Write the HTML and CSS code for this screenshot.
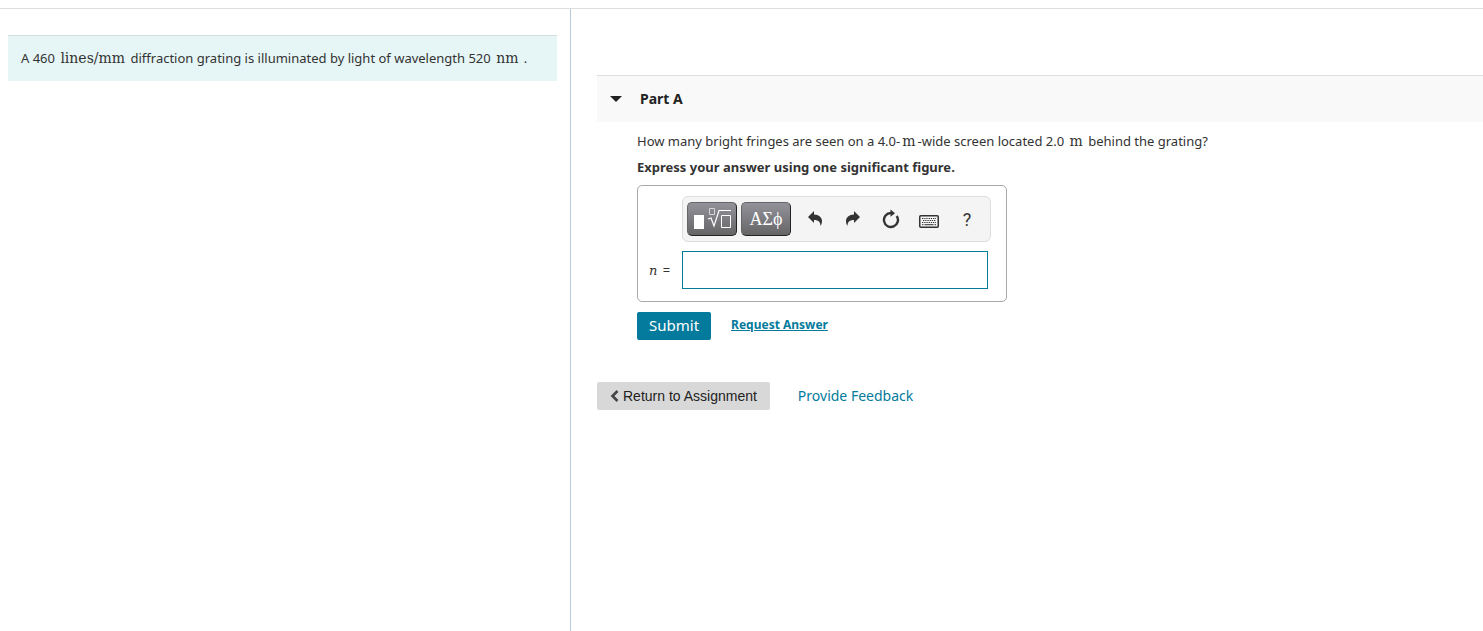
FILE: index.html
```html
<!DOCTYPE html>
<html lang="en">
<head>
  <meta charset="UTF-8" />
  <title>Diffraction Grating</title>
  <meta name="viewport" content="width=device-width, initial-scale=1.0"/>
  <link rel="stylesheet" href="styles.css">
</head>
<body>

  <div class="page">
    <aside class="intro">
      <p class="problem">A 460 <span class="math">lines/mm</span> diffraction grating is illuminated by light of wavelength 520 <span class="math">nm</span> .</p>
    </aside>

    <main class="content">
      <section>
        <h2 class="part-header">
          <button type="button" class="part-toggle" aria-expanded="true">
            <svg width="12" height="6" viewBox="0 0 12 6"><path d="M0 0h12L6 6z" fill="currentColor"/></svg>
            Part A
          </button>
        </h2>

        <form class="part-body">
          <p class="question">How many bright fringes are seen on a 4.0-<span class="math">m</span>-wide screen located 2.0 <span class="math">m</span> behind the grating?</p>
          <p class="instructions">Express your answer using one significant figure.</p>

          <div class="answer-box">
            <div class="toolbar">
              <button type="button" class="palette" aria-label="Templates">
                <svg width="38" height="22" viewBox="0 0 38 22" fill="none" stroke="#fff">
                  <path d="M1 7h10v14H1z" fill="#fff" stroke="none"/>
                  <path d="M16.500.5h5v6h-5z" stroke="#d5d5d8"/>
                  <path d="M15 11l3-1 3 8 5-15.500h12" stroke-width="1.200"/>
                  <path d="M28.500 7.500h9v12h-9z"/>
                </svg>
              </button>
              <button type="button" class="palette">ΑΣϕ</button>
              <button type="button" class="tool" aria-label="Undo">
                <svg width="14" height="16" viewBox="0 0 14 16"><path d="M0 6L6 0v3.500c5 0 8 3 8 6.500 0 2-.7 3.700-1.500 5 0-4-2-6-6.500-6v3z" fill="currentColor"/></svg>
              </button>
              <button type="button" class="tool" aria-label="Redo">
                <svg width="14" height="16" viewBox="0 0 14 16"><path d="M14 6L8 0v3.500c-5 0-8 3-8 6.500 0 2 .7 3.700 1.500 5 0-4 2-6 6.500-6v3z" fill="currentColor"/></svg>
              </button>
              <button type="button" class="tool" aria-label="Reset">
                <svg width="18" height="20" viewBox="0 0 18 20"><path d="M14.700 7A7 7 0 1 1 9 4" fill="none" stroke="currentColor" stroke-width="2.400"/><path d="M8.500 0.500L13 4.200L8.500 7.800z" fill="currentColor"/></svg>
              </button>
              <button type="button" class="tool" aria-label="Keyboard shortcuts">
                <svg class="keyboard" width="20" height="13" viewBox="0 0 20 13" fill="none" stroke="currentColor">
                  <rect x=".75" y=".75" width="18.500" height="11.500" rx="1" stroke-width="1.500"/>
                  <path d="M3 3.500h14M4 5.500h13M3 7.500h14" stroke-dasharray="1.300 .9"/>
                  <path d="M3 9.700h1.500M5.500 9.700h9M15.500 9.700h1.500"/>
                </svg>
              </button>
              <button type="button" class="tool help" aria-label="Help">?</button>
            </div>
            <label class="answer-label" for="answer"><i class="math">n</i> =</label>
            <input type="text" class="answer" id="answer">
          </div>

          <div class="actions">
            <button type="button" class="submit">Submit</button>
            <a href="#" class="request">Request Answer</a>
          </div>
        </form>
      </section>

      <footer class="page-nav">
        <button type="button" class="return">
          <svg width="9" height="12" viewBox="0 0 9 12"><path d="M7.500 1L2.500 6l5 5" fill="none" stroke="#444" stroke-width="2.600"/></svg>
          Return to Assignment
        </button>
        <a href="#" class="feedback">Provide Feedback</a>
      </footer>
    </main>
  </div>

</body>
</html>
```
FILE: styles.css
```css
* { margin: 0; padding: 0; box-sizing: border-box; }
body {
  background: #fff;
  font-family: "Noto Sans", "Open Sans", sans-serif;
  font-size: 13px;
  line-height: 26px;
  color: #333;
  padding-top: 8px;
}
button {
  border: none;
  cursor: pointer;
  font-family: inherit;
}
svg {
  display: block;
}
.page {
  display: flex;
  min-height: calc(100vh - 8px);
  border-top: 1px solid #ddd;
}

/* Left column */
.intro {
  width: 571px;
  flex: none;
  padding: 26px 13px 0 8px;
  border-right: 1px solid #b8cad9;
}
.problem {
  padding: 9px 13px 10px;
  background: #e6f6f6;
  border-top: 1px solid #d5dfe0;
}
.math {
  margin: 0 2px;
  font-family: "DejaVu Serif", serif;
  font-size: 14px;
  line-height: 1;
}

/* Right column */
.content {
  flex: 1;
  min-width: 0;
  padding: 66px 0 0 26px;
}
.part-header {
  background: #f9f9f9;
  border-top: 1px solid #ddd;
}
.part-toggle {
  display: flex;
  align-items: center;
  gap: 18px;
  width: 100%;
  padding: 10px 13px;
  background: none;
  color: #222;
  font-size: 14px;
  font-weight: bold;
  line-height: 26px;
}
.part-body {
  padding: 6px 16px 0 40px;
}
.instructions {
  font-weight: bold;
}
.answer-box {
  display: grid;
  grid-template-columns: 33px 1fr;
  row-gap: 9px;
  width: 370px;
  max-width: 100%;
  margin-top: 5px;
  padding: 10px 15px 12px 11px;
  border: 1px solid #aaa;
  border-radius: 5px;
}
.toolbar {
  grid-column: 2;
  display: flex;
  align-items: center;
  gap: 4px;
  height: 46px;
  padding: 0 4px;
  background: #f4f4f4;
  border: 1px solid #ddd;
  border-radius: 6px;
}
.palette {
  display: flex;
  align-items: center;
  justify-content: center;
  width: 50px;
  height: 34px;
  flex: none;
  background: linear-gradient(#93929a, #656567);
  border: 1px solid #222;
  border-top-color: #666;
  border-left-color: #666;
  border-radius: 5px;
  color: #fff;
  font-family: "Liberation Serif", serif;
  font-size: 18px;
}
.tool {
  display: flex;
  align-items: center;
  justify-content: center;
  width: 34px;
  height: 34px;
  background: none;
  color: #333;
}
.palette + .tool {
  margin-left: 3px;
}
.keyboard {
  margin-top: 4px;
}
.help {
  font-family: Roboto, sans-serif;
  font-size: 18px;
}
.answer-label {
  align-self: center;
  white-space: nowrap;
}
.answer-label .math {
  margin-left: 0;
  font-size: 13px;
}
.answer {
  width: 306px;
  max-width: 100%;
  height: 38px;
  padding: 0 8px;
  border: 1px solid #047a9c;
  font-family: inherit;
  font-size: 16px;
}
.actions {
  display: flex;
  gap: 20px;
  padding-top: 10px;
}
.submit {
  height: 28px;
  padding: 0 12px 2px;
  background: #047a9c;
  border-radius: 2px;
  color: #fff;
  font-size: 15px;
}
.request {
  color: #047a9c;
  font-size: 12px;
  font-weight: bold;
}

/* Bottom links */
.page-nav {
  display: flex;
  align-items: center;
  gap: 28px;
  padding-top: 42px;
}
.return {
  display: flex;
  align-items: center;
  gap: 4px;
  height: 28px;
  padding: 0 13px;
  background: #d8d8d8;
  border-radius: 2px;
  color: #222;
  font-family: "Liberation Sans", Arial, sans-serif;
  font-size: 14px;
}
.feedback {
  color: #047a9c;
  font-size: 14px;
  text-decoration: none;
}
```
